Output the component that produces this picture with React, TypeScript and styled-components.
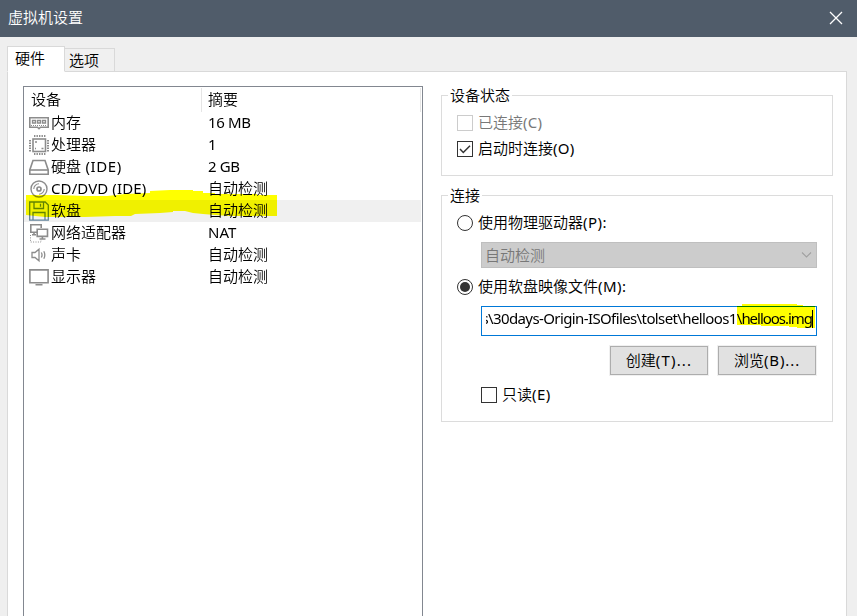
import React from 'react';
import styled, { createGlobalStyle } from 'styled-components';

const GlobalStyle = createGlobalStyle`
  * { box-sizing: border-box; }
  html, body { margin: 0; overflow: hidden; }
  body { background: #efefef; font-family: "Noto Sans", "Noto Sans CJK SC", sans-serif; font-size: 15px; font-weight: 350; color: #000; }
`;

const Window = styled.div`
  width: 857px;
  height: 616px;
  display: flex;
  flex-direction: column;
  overflow: hidden;
  white-space: nowrap;
`;

const TitleBar = styled.header`
  flex: none;
  height: 37px;
  padding: 0 14px 0 8px;
  display: flex;
  align-items: flex-start;
  justify-content: space-between;
  background: #505c6a;
  color: #fff;
  line-height: 35px;
`;

const CloseIcon = styled.svg`
  margin-top: 11px;
`;

const TabStrip = styled.nav`
  flex: none;
  display: flex;
  align-items: flex-end;
  height: 35px;
  padding-left: 7px;
`;

const Tab = styled.div<{ $active?: boolean }>`
  width: ${p => (p.$active ? 58 : 50)}px;
  height: ${p => (p.$active ? 26 : 24)}px;
  padding-left: ${p => (p.$active ? 7 : 4)}px;
  line-height: ${p => (p.$active ? 22 : 22)}px;
  background: ${p => (p.$active ? '#fff' : '#f0f0f0')};
  border: 1px solid #d9d9d9;
  border-left-width: ${p => (p.$active ? 1 : 0)}px;
  border-bottom-color: ${p => (p.$active ? '#fff' : '#d9d9d9')};
`;

const Panel = styled.main`
  flex: none;
  width: 840px;
  height: 600px;
  margin: -1px 0 0 7px;
  padding: 14px 13px 0 15px;
  display: flex;
  gap: 18px;
  background: #fff;
  border: 1px solid #d9d9d9;
  z-index: -1;
`;

const DeviceList = styled.section`
  position: relative;
  width: 400px;
  border: 1px solid #828790;
  isolation: isolate;
`;

const columns = '177px 1fr';

const ListHeader = styled.div`
  display: grid;
  grid-template-columns: ${columns};
  height: 25px;
  margin-right: 1px;
  padding-top: 1px;
  line-height: 23px;
`;

const HeaderCell = styled.div`
  padding-left: 7px;
  &:first-child + & { padding-left: 6px; border-left: 1px solid #e5e5e5; border-right: 1px solid #e5e5e5; }
`;

const Row = styled.div<{ $selected?: boolean }>`
  display: grid;
  grid-template-columns: ${columns};
  height: 22px;
  margin-right: 1px;
  line-height: 21px;
  background: ${p => (p.$selected ? '#f0f0f0' : 'transparent')};
`;

const DeviceName = styled.div`
  display: flex;
  align-items: flex-start;
  gap: 2px;
  padding-left: 5px;
`;

const Summary = styled.div`
  padding-left: 7px;
`;

const Marker = styled.svg<{ $left: number; $top: number }>`
  position: absolute;
  left: ${p => p.$left}px;
  top: ${p => p.$top}px;
  mix-blend-mode: multiply;
  pointer-events: none;
`;

const Settings = styled.section`
  width: 392px;
  display: flex;
  flex-direction: column;
  gap: 19px;
  padding-top: 9px;
`;

const Group = styled.div<{ $height: number }>`
  display: flex;
  flex-direction: column;
  height: ${p => p.$height}px;
  padding: 0 15px;
  border: 1px solid #dcdcdc;
`;

const Legend = styled.div`
  align-self: flex-start;
  flex: none;
  height: 20px;
  margin: -11px 0 0 -9px;
  padding: 0 2px;
  background: #fff;
  line-height: 20px;
`;

const Option = styled.label<{ $top?: number; $indent?: number; $muted?: boolean }>`
  display: flex;
  align-items: flex-start;
  flex: none;
  gap: 5px;
  height: 16px;
  line-height: 15px;
  margin-top: ${p => p.$top ?? 0}px;
  margin-left: ${p => p.$indent ?? 0}px;
  color: ${p => (p.$muted ? '#787878' : '#000')};
`;

const CheckBox = styled.span<{ $muted?: boolean }>`
  width: 16px;
  height: 16px;
  display: flex;
  border: 1px solid ${p => (p.$muted ? '#ccc' : '#333')};
`;

const Radio = styled.span`
  width: 16px;
  height: 16px;
  display: grid;
  place-items: center;
  border: 1px solid #333;
  border-radius: 50%;
`;

const RadioDot = styled.span`
  width: 10px;
  height: 10px;
  border-radius: 50%;
  background: #333;
`;

const Select = styled.div`
  flex: none;
  display: flex;
  align-items: center;
  justify-content: space-between;
  width: 336px;
  height: 26px;
  margin: 11px 0 0 24px;
  padding: 0 4px 0 3px;
  border: 1px solid #bfbfbf;
  background: #ccc;
  color: #787878;
  line-height: 24px;
`;

const PathField = styled.div`
  position: relative;
  isolation: isolate;
  flex: none;
  width: 336px;
  height: 30px;
  margin: 11px 0 0 24px;
  padding: 0 3px 0 4px;
  border: 1px solid #0078d7;
  background: #fff;
`;

const PathClip = styled.div`
  display: flex;
  justify-content: flex-end;
  overflow: hidden;
  height: 28px;
  line-height: 23px;
`;

const Caret = styled.span`
  flex: none;
  width: 1px;
  height: 18px;
  margin-top: 3px;
  background: #000;
`;

const Buttons = styled.div`
  display: flex;
  justify-content: flex-end;
  flex: none;
  gap: 10px;
  margin: 10px 1px 0 0;
`;

const Button = styled.button`
  width: 98px;
  height: 29px;
  padding: 0;
  border: 1px solid #adadad;
  outline: 1px solid #f0f0f0;
  background: #e1e1e1;
  color: #000;
  font: inherit;
  line-height: 27px;
`;

const Latin = styled.span<{ $spacing?: number }>`
  font-weight: 400;
  letter-spacing: ${p => p.$spacing ?? 0}px;
`;

const Glyph = styled.svg`
  flex: none;
  width: 20px;
  height: 20px;
  margin-top: 1px;
  fill: none;
  stroke: #8c8c8c;
  stroke-width: 1.6;
`;

type IconName = 'memory' | 'cpu' | 'disk' | 'cd' | 'floppy' | 'network' | 'sound' | 'display';

const icons: Record<IconName, React.ReactNode> = {
  memory: <><path d="M.8 4.8h18.4v9.4H11.4l-1.4 1.5-1.4-1.5H.8z" /><path d="M3.5 7.5h3v2.5h-3zM8.5 7.5h3v2.5h-3zM13.5 7.5h3v2.5h-3z" strokeWidth="1.3" /><path d="M2 12.5h16" strokeDasharray="1 1" strokeWidth="1" /></>,
  cpu: <><rect x="4" y="4" width="12.5" height="12.5" /><path d="M5 1h12M5 19h12M1 5v12M19 5v12" strokeDasharray="1.4 1.1" strokeWidth="2" /><path d="M6 7h2M12.5 13.5h2M6 13.5h1" strokeWidth="1.3" /></>,
  disk: <><path d="M4 3.5h12L19.2 13v4.3H.8V13z" /><path d="M.8 13h18.4" /></>,
  cd: <><circle cx="10" cy="10" r="8" strokeWidth="1.4" /><circle cx="10" cy="10" r="2" strokeWidth="1.7" /><path d="M4.8 10A5.2 5.2 0 0 1 10 4.8M15.2 10a5.2 5.2 0 0 1-5.2 5.2" strokeWidth="1.1" /></>,
  floppy: <g stroke="#61839a" strokeWidth="1.3"><path d="M.7 1h15.5L19.3 4v15.2H.7z" /><path d="M5 1v6.5h9.5V1M11.5 2.8v3M4 19v-7.5h12V19" /></g>,
  network: <><path d="M8 9.2H1.8V1.8h10.4V5" /><path d="M8.2 6.2h10.3v7.2H8.2z" fill="#fff" /><path d="M13.4 13.4v2.4M10.5 16h6M5 9v2.5M3 11.7h4" /><path d="M1.5 12v7h10.5v-2" strokeDasharray="1 1.4" strokeWidth="1" /></>,
  sound: <><path d="M3 7.5h3l4-3.3v11.6l-4-3.3H3z" strokeWidth="1.3" /><path d="M12.3 7.5q1.5 2.5 0 5M14.8 6.3q2 3.7 0 7.4" strokeWidth="1.3" /></>,
  display: <path d="M.9 2.9h18.2v12.8H.9zM6.5 17.8h7" />,
};

interface Device {
  icon: IconName;
  name?: string;
  latinName?: string;
  nameSpacing?: number;
  summary?: string;
  latinSummary?: string;
  selected?: boolean;
}

const devices: Device[] = [
  { icon: 'memory', name: '内存', latinSummary: '16 MB' },
  { icon: 'cpu', name: '处理器', latinSummary: '1' },
  { icon: 'disk', name: '硬盘', latinName: ' (IDE)', nameSpacing: 0.6, latinSummary: '2 GB' },
  { icon: 'cd', latinName: 'CD/DVD (IDE)', nameSpacing: 0.1, summary: '自动检测' },
  { icon: 'floppy', name: '软盘', summary: '自动检测', selected: true },
  { icon: 'network', name: '网络适配器', latinSummary: 'NAT' },
  { icon: 'sound', name: '声卡', summary: '自动检测' },
  { icon: 'display', name: '显示器', summary: '自动检测' },
];

export default function App() {
  return (
    <Window>
      <GlobalStyle />
      <TitleBar>
        <span>虚拟机设置</span>
        <CloseIcon width="14" height="14" viewBox="0 0 14 14" stroke="#fff" strokeWidth="1.3"><path d="M1 1l12 12M13 1L1 13" /></CloseIcon>
      </TitleBar>
      <TabStrip>
        <Tab $active>硬件</Tab>
        <Tab>选项</Tab>
      </TabStrip>
      <Panel>
        <DeviceList>
          <ListHeader>
            <HeaderCell>设备</HeaderCell>
            <HeaderCell>摘要</HeaderCell>
          </ListHeader>
          {devices.map(d => (
            <Row key={d.icon} $selected={d.selected}>
              <DeviceName>
                <Glyph viewBox="0 0 20 20">{icons[d.icon]}</Glyph>
                <span>{d.name}{d.latinName && <Latin $spacing={d.nameSpacing}>{d.latinName}</Latin>}</span>
              </DeviceName>
              <Summary>{d.summary}{d.latinSummary && <Latin $spacing={d.latinSummary.length > 3 ? -0.35 : 0}>{d.latinSummary}</Latin>}</Summary>
            </Row>
          ))}
          <Marker $left={1} $top={102} width="254" height="30">
            <path fill="#ff0" d="M1 6H32L60 7H82L100 5L125 4V2L145 1H168V2H178V4H190V5H232V6H252V27H205L190 26L178 25L168 24L160 22H148V23L135 24L110 25L106 27L90 27L60 28H20L1 26Z" />
          </Marker>
        </DeviceList>
        <Settings>
          <Group $height={81}>
            <Legend>设备状态</Legend>
            <Option $top={10} $muted><CheckBox $muted /><span>已连接<Latin $spacing={0.3}>(C)</Latin></span></Option>
            <Option $top={10}>
              <CheckBox><svg width="14" height="14" viewBox="0 0 14 14" fill="none" stroke="#333" strokeWidth="1.5"><path d="M2 7l3.3 3.5L12 3.7" /></svg></CheckBox>
              <span>启动时连接<Latin $spacing={0.3}>(O)</Latin></span>
            </Option>
          </Group>
          <Group $height={227}>
            <Legend>连接</Legend>
            <Option $top={10}><Radio /><span>使用物理驱动器<Latin $spacing={0.5}>(P):</Latin></span></Option>
            <Select>
              自动检测
              <svg width="11" height="8" viewBox="0 0 11 8" fill="none" stroke="#a0a0a0" strokeWidth="1.1"><path d="M1 1.5l4.5 4.5L10 1.5" /></svg>
            </Select>
            <Option $top={11}><Radio><RadioDot /></Radio><span>使用软盘映像文件<Latin $spacing={0.5}>(M):</Latin></span></Option>
            <PathField>
              <PathClip>
                <Latin $spacing={-0.61}>s\30days-Origin-ISOfiles\tolset\helloos1</Latin>
                <Latin $spacing={-1.03}>\helloos.img</Latin>
                <Caret />
              </PathClip>
              <Marker $left={255} $top={-3} width="79" height="26">
                <path fill="#ff0" d="M0 2H5V0H60V1H66V2H78V24H60V23H52V22H24V21H0Z" />
              </Marker>
            </PathField>
            <Buttons>
              <Button>创建<Latin $spacing={1.2}>(T)...</Latin></Button>
              <Button>浏览<Latin $spacing={0.9}>(B)...</Latin></Button>
            </Buttons>
            <Option $top={12} $indent={24}><CheckBox /><span>只读<Latin $spacing={0.4}>(E)</Latin></span></Option>
          </Group>
        </Settings>
      </Panel>
    </Window>
  );
}
